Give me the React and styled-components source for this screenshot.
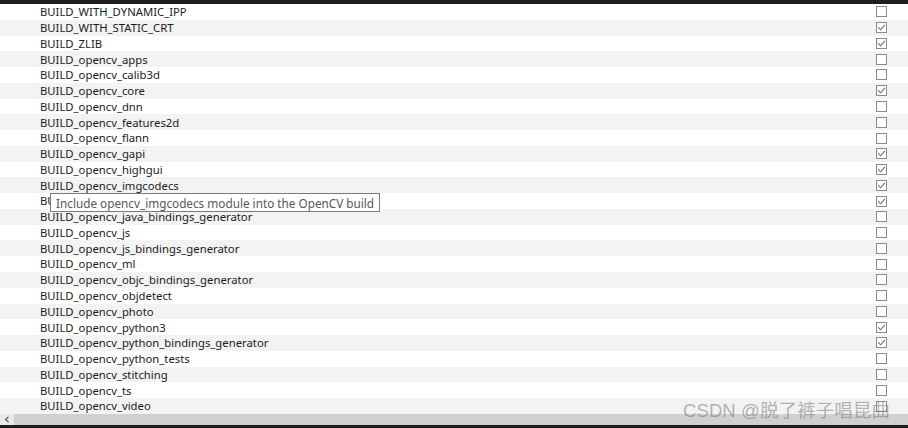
import React from "react";
import styled, { createGlobalStyle } from "styled-components";

const Global = createGlobalStyle`
  html, body { margin: 0; padding: 0; background: #1e1e1e; }
  #root { width: 908px; height: 428px; }
`;

const Page = styled.div`
  position: relative;
  width: 908px;
  height: 428px;
  display: flex;
  flex-direction: column;
  background: #1e1e1e;
  font-family: "Noto Sans", "Open Sans", sans-serif;
  overflow: hidden;
`;

const TopBar = styled.div`
  height: 4px;
  flex: none;
  background: #1e1e1e;
`;

const List = styled.div`
  flex: none;
  display: flex;
  flex-direction: column;
  background: #ffffff;
`;

const Row = styled.div`
  height: 15.77px;
  display: flex;
  align-items: center;
  padding-left: 40px;
  padding-right: 21px;
  background: ${(p) => (p.$alt ? "#f3f3f3" : "#ffffff")};
`;

const Label = styled.span`
  flex: 1;
  font-size: 11.3px;
  color: #1b1b1b;
  white-space: nowrap;
  line-height: 1;
`;

const Box = styled.span`
  width: 9px;
  height: 9px;
  border: 1px solid #8a8a8a;
  background: #fff;
  display: flex;
  align-items: center;
  justify-content: center;
`;

const ScrollBar = styled.div`
  height: 11px;
  flex: none;
  display: flex;
  background: #d3d3d3;
`;

const ArrowButton = styled.div`
  width: 14px;
  display: flex;
  align-items: center;
  justify-content: center;
  background: #e9e9e9;
`;

const Track = styled.div`
  flex: 1;
  background: #d0d0d0;
`;

const BottomBar = styled.div`
  flex: 1;
  background: #1e1e1e;
`;

const Tooltip = styled.div`
  position: absolute;
  left: 50px;
  top: 193px;
  height: 17px;
  padding: 0 5px;
  border: 1px solid #7a7a7a;
  background: #ffffff;
  font-size: 11.75px;
  color: #575757;
  display: flex;
  align-items: center;
  white-space: nowrap;
`;

const Watermark = styled.div`
  position: absolute;
  left: 683px;
  top: 396px;
  font-family: "Liberation Sans", "Noto Sans CJK SC", sans-serif;
  font-size: 18.5px;
  color: rgba(120, 120, 120, 0.55);
  white-space: nowrap;
  letter-spacing: 0.1px;
`;

const rows = [
  ["BUILD_WITH_DYNAMIC_IPP", false],
  ["BUILD_WITH_STATIC_CRT", true],
  ["BUILD_ZLIB", true],
  ["BUILD_opencv_apps", false],
  ["BUILD_opencv_calib3d", false],
  ["BUILD_opencv_core", true],
  ["BUILD_opencv_dnn", false],
  ["BUILD_opencv_features2d", false],
  ["BUILD_opencv_flann", false],
  ["BUILD_opencv_gapi", true],
  ["BUILD_opencv_highgui", true],
  ["BUILD_opencv_imgcodecs", true],
  ["BUILD_opencv_imgproc", true],
  ["BUILD_opencv_java_bindings_generator", false],
  ["BUILD_opencv_js", false],
  ["BUILD_opencv_js_bindings_generator", false],
  ["BUILD_opencv_ml", false],
  ["BUILD_opencv_objc_bindings_generator", false],
  ["BUILD_opencv_objdetect", false],
  ["BUILD_opencv_photo", false],
  ["BUILD_opencv_python3", true],
  ["BUILD_opencv_python_bindings_generator", true],
  ["BUILD_opencv_python_tests", false],
  ["BUILD_opencv_stitching", false],
  ["BUILD_opencv_ts", false],
  ["BUILD_opencv_video", false],
];

function Check() {
  return (
    <svg width="9" height="9" viewBox="0 0 9 9">
      <path d="M1.2 4.4 L3.6 6.8 L7.9 1.8" fill="none" stroke="#6b6b6b" strokeWidth="1.1" />
    </svg>
  );
}

export default function App() {
  return (
    <Page>
      <Global />
      <TopBar />
      <List>
        {rows.map(([name, checked], i) => (
          <Row key={name} $alt={i % 2 === 1}>
            <Label>{name}</Label>
            <Box>{checked && <Check />}</Box>
          </Row>
        ))}
      </List>
      <ScrollBar>
        <ArrowButton>
          <svg width="6" height="7" viewBox="0 0 6 7">
            <path d="M4.5 0.8 L1.5 3.5 L4.5 6.2" fill="none" stroke="#444" strokeWidth="1.1" />
          </svg>
        </ArrowButton>
        <Track />
      </ScrollBar>
      <BottomBar />
      <Tooltip>Include opencv_imgcodecs module into the OpenCV build</Tooltip>
      <Watermark>CSDN @脱了裤子唱昆曲</Watermark>
    </Page>
  );
}
